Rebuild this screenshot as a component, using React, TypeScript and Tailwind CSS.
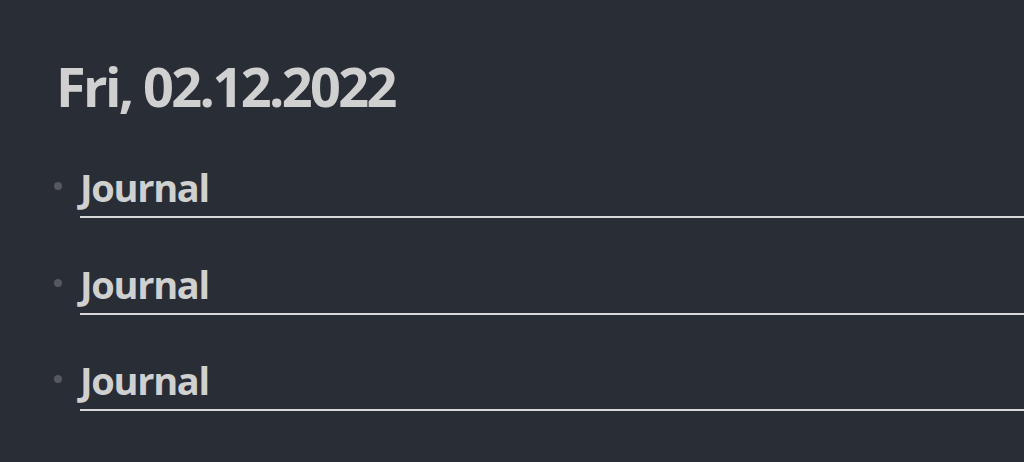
import React from 'react';

const items = ['Journal', 'Journal', 'Journal'];

const App = () => {
  return (
    <div
      className="h-[462px] w-full overflow-hidden bg-[#292d36] pl-[54px] pt-[52px]"
      style={{ fontFamily: '"Open Sans", "Noto Sans", sans-serif' }}
    >
      <h1 className="ml-[2px] text-[54px] font-bold leading-[69px] tracking-[-2.6px] text-[#d0d0d0]">Fri, 02.12.2022</h1>
      <ul className="mt-[40px] flex flex-col gap-[39.5px]">
        {items.map((t, i) => (
          <li key={i} className="flex items-start">
            <span className="mt-[21px] h-[8px] w-[8px] shrink-0 rounded-full bg-[#55585f]" />
            <div className="ml-[18px] flex-1 border-b-2 border-[#d8d8d8] pb-[3px]">
              <span className="block text-[38px] font-bold leading-[52px] tracking-[-1.3px] text-[#d0d0d0]">{t}</span>
            </div>
          </li>
        ))}
      </ul>
    </div>
  );
};

export default App;
